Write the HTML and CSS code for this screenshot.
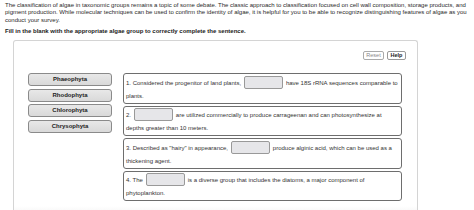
FILE: index.html
```html
<!DOCTYPE html>
<html>
<head>
<meta charset="utf-8">
<link rel="stylesheet" href="styles.css">
</head>
<body>
<p class="intro">The classification of algae in taxonomic groups remains a topic of some debate. The classic approach to classification focused on cell wall composition, storage products, and pigment production. While molecular techniques can be used to confirm the identity of algae, it is helpful for you to be able to recognize distinguishing features of algae as you conduct your survey.</p>
<p class="task">Fill in the blank with the appropriate algae group to correctly complete the sentence.</p>
<div class="panel">
  <div class="toolbar">
    <span class="btn reset">Reset</span>
    <span class="btn help">Help</span>
  </div>
  <div class="work">
    <div class="bank">
      <div class="chip">Phaeophyta</div>
      <div class="chip">Rhodophyta</div>
      <div class="chip">Chlorophyta</div>
      <div class="chip">Chrysophyta</div>
    </div>
    <div class="sentences">
      <div class="sent">1. Considered the progenitor of land plants, <span class="blank"></span> have 18S rRNA sequences comparable to plants.</div>
      <div class="sent">2. <span class="blank"></span> are utilized commercially to produce carrageenan and can photosynthesize at depths greater than 10 meters.</div>
      <div class="sent">3. Described as "hairy" in appearance, <span class="blank"></span> produce alginic acid, which can be used as a thickening agent.</div>
      <div class="sent">4. The <span class="blank"></span> is a diverse group that includes the diatoms, a major component of phytoplankton.</div>
    </div>
  </div>
  <div class="fade"></div>
</div>
</body>
</html>
```
FILE: styles.css
```css
html, body {
  margin: 0;
  padding: 0;
  background: #fff;
}
body {
  font-family: "Liberation Sans", Arial, sans-serif;
  color: #2a2a2a;
  font-size: 6px;
  line-height: 7.3px;
  padding: 2px 6px 0 5px;
  width: 463px;
  height: 208px;
  overflow: hidden;
}
.intro {
  margin: 0;
}
.task {
  margin: 4px 0 0 0;
  font-weight: bold;
  color: #222;
}
.panel {
  margin: 5px 0 0 8px;
  width: 405px;
  height: 180px;
  border: 1px solid #d4d4d4;
  border-bottom: none;
  border-radius: 3px 3px 0 0;
  position: relative;
  box-sizing: border-box;
}
.toolbar {
  display: flex;
  justify-content: flex-end;
  gap: 3px;
  padding: 10px 11px 0 0;
}
.btn {
  display: block;
  height: 9px;
  box-sizing: border-box;
  border: 1px solid #aaa;
  border-radius: 2px;
  font-size: 5.5px;
  line-height: 7px;
  padding: 0 2px;
  background: #fff;
}
.reset {
  color: #888;
  width: 21px;
  text-align: center;
}
.help {
  font-weight: bold;
  color: #222;
  width: 19px;
  text-align: center;
  border-color: #999;
}
.work {
  display: flex;
  gap: 11px;
  padding: 13px 0 0 14px;
}
.bank {
  width: 84px;
  display: flex;
  flex-direction: column;
  gap: 2.5px;
}
.chip {
  height: 13px;
  box-sizing: border-box;
  border: 1px solid #8a8a8a;
  border-radius: 3px;
  background: linear-gradient(#e8e8e8, #d9d9d9);
  font-weight: bold;
  text-align: center;
  line-height: 11px;
  color: #222;
}
.sentences {
  width: 279px;
  display: flex;
  flex-direction: column;
  gap: 2px;
}
.sent {
  height: 30.5px;
  box-sizing: border-box;
  border: 1px solid #6e6e6e;
  border-radius: 3px;
  padding: 1.5px 2px 0 2px;
  line-height: 13px;
  color: #333;
}
.blank {
  display: inline-block;
  vertical-align: -4px;
  width: 39px;
  height: 13px;
  box-sizing: border-box;
  border: 1px solid #999;
  border-radius: 2px;
  background: #e6e6e9;
  margin: 0 1.5px 0 1px;
}
.fade {
  position: absolute;
  left: 0;
  right: 0;
  bottom: 0;
  height: 14px;
  background: linear-gradient(rgba(240,240,240,0), rgba(235,235,235,0.9));
}
```
